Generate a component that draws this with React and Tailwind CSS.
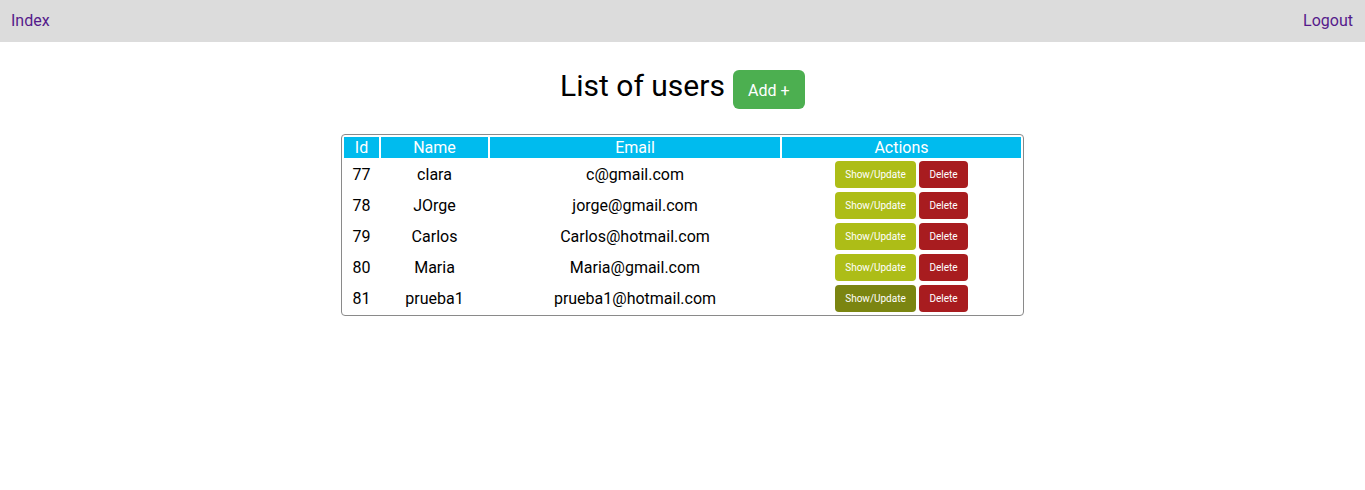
import React from "react";

const users = [
  { id: 77, name: "clara", email: "c@gmail.com" },
  { id: 78, name: "JOrge", email: "jorge@gmail.com" },
  { id: 79, name: "Carlos", email: "Carlos@hotmail.com" },
  { id: 80, name: "Maria", email: "Maria@gmail.com" },
  { id: 81, name: "prueba1", email: "prueba1@hotmail.com", hover: true },
];

export default function App() {
  return (
    <div className="min-h-[490px] bg-white font-['Roboto',sans-serif] text-base text-black">
      <nav className="flex h-[42px] items-center justify-between bg-[#dcdcdc] pl-[11px] pr-3">
        <a href="#" className="text-[#551a8b]">Index</a>
        <a href="#" className="text-[#551a8b]">Logout</a>
      </nav>

      <div className="mt-[28px] flex items-baseline justify-center gap-2">
        <h1 className="text-[30px] leading-none">List of users</h1>
        <button
          type="button"
          className="h-[39px] w-[72px] rounded-md bg-[#4caf50] pt-[2px] text-white"
        >
          Add +
        </button>
      </div>

      <div className="mt-[25px] flex justify-center">
        <table className="border-separate border-spacing-[2px] rounded border border-[#8a8a8a] text-center">
          <thead>
            <tr className="h-[21px] bg-[#00bbee] text-white leading-none">
              <th className="w-[35px] font-normal">Id</th>
              <th className="w-[107px] font-normal">Name</th>
              <th className="w-[290px] font-normal">Email</th>
              <th className="w-[239px] font-normal">Actions</th>
            </tr>
          </thead>
          <tbody>
            {users.map((u) => (
              <tr key={u.id} className="h-[29px]">
                <td className="pt-[1px]">{u.id}</td>
                <td className="pt-[1px]">{u.name}</td>
                <td className="pt-[1px]">{u.email}</td>
                <td>
                  <div className="flex justify-center gap-[3px]">
                    <button
                      type="button"
                      className={`h-[27px] w-[81px] rounded text-[10px] text-white ${
                        u.hover ? "bg-[#7b8511]" : "bg-[#adbd17]"
                      }`}
                    >
                      Show/Update
                    </button>
                    <button
                      type="button"
                      className="h-[27px] w-[49px] rounded bg-[#a81c1f] text-[10px] text-white"
                    >
                      Delete
                    </button>
                  </div>
                </td>
              </tr>
            ))}
          </tbody>
        </table>
      </div>
    </div>
  );
}
